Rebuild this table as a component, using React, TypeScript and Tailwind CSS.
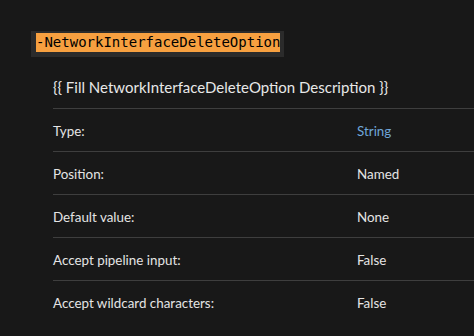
const rows: { label: string; value: string; link?: boolean }[] = [
  { label: "Type:", value: "String", link: true },
  { label: "Position:", value: "Named" },
  { label: "Default value:", value: "None" },
  { label: "Accept pipeline input:", value: "False" },
  { label: "Accept wildcard characters:", value: "False" },
];

const App = () => {
  return (
    <main className="w-[474px] h-[336px] overflow-hidden bg-[#181818] pt-[29px] pl-[31px] font-['Lato','Open_Sans',sans-serif]">
      {/* Parameter name */}
      <div className="inline-block bg-[#2b2b2b] pt-[2px] pb-[5px] pl-[5px] pr-[4px]">
        <span className="block bg-[#f7a040] text-black font-['DejaVu_Sans_Mono',monospace] text-[14px] leading-[19px]">
          -NetworkInterfaceDeleteOption
        </span>
      </div>

      <div className="ml-[22px]">
        <p className="mt-[19px] text-[15px] leading-[22px] text-[#e8e8e8]">
          {"{{ Fill NetworkInterfaceDeleteOption Description }}"}
        </p>

        {/* Parameter table */}
        <div className="mt-[10px]">
          {rows.map((row) => (
            <div
              key={row.label}
              className="flex items-center h-[43px] pt-[3px] border-t border-[#3e3e3e] text-[13.4px] text-[#e4e4e4]"
            >
              <span className="w-[304px]">{row.label}</span>
              <span className={row.link ? "text-[#6fa6d9]" : ""}>{row.value}</span>
            </div>
          ))}
        </div>
      </div>
    </main>
  );
};

export default App;
